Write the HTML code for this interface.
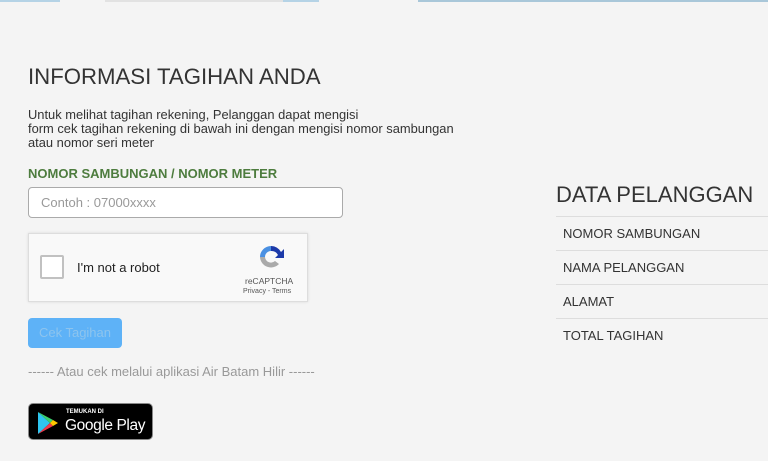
<!DOCTYPE html>
<html><head><meta charset="utf-8"><style>
body{margin:0;width:768px;height:461px;background:#f4f4f4;font-family:"Liberation Sans",sans-serif;position:relative;overflow:hidden;color:#333}
.a{position:absolute;white-space:nowrap}
.row{position:absolute;left:556px;width:212px;border-top:1px solid #ddd;height:33px;font-size:13px;color:#333;line-height:33px;padding-left:7px;box-sizing:border-box}
</style></head><body>
<div class="a" style="left:0;top:0;width:60px;height:2px;background:#b5d3e6"></div>
<div class="a" style="left:105px;top:0;width:180px;height:2px;background:#e2e2e2"></div>
<div class="a" style="left:283px;top:0;width:36px;height:2px;background:#b5d3e6"></div>
<div class="a" style="left:418px;top:0;width:350px;height:2px;background:#a9c7d9"></div>

<div class="a" style="left:28px;top:64px;font-size:22.2px;color:#333">INFORMASI TAGIHAN ANDA</div>
<div class="a" style="left:28px;top:108px;font-size:12.9px;line-height:14px;color:#333">Untuk melihat tagihan rekening, Pelanggan dapat mengisi<br>form cek tagihan rekening di bawah ini dengan mengisi nomor sambungan<br>atau nomor seri meter</div>
<div class="a" style="left:28px;top:166px;font-size:13px;font-weight:bold;color:#4d7c3e">NOMOR SAMBUNGAN / NOMOR METER</div>
<div class="a" style="left:28px;top:187px;width:315px;height:31px;border:1px solid #aaa;border-radius:4px;background:#fff;box-sizing:border-box;font-size:13px;color:#999;line-height:29px;padding-left:12px">Contoh : 07000xxxx</div>

<div class="a" style="left:28px;top:233px;width:280px;height:69px;background:#f9f9f9;border:1px solid #ddd;box-shadow:0 0 3px rgba(0,0,0,.1);box-sizing:border-box">
 <div class="a" style="left:11px;top:21px;width:24px;height:24px;border:2px solid #c1c1c1;border-radius:2px;background:#fff;box-sizing:border-box"></div>
 <div class="a" style="left:48px;top:26px;font-size:13px;color:#222">I'm not a robot</div>
 <svg class="a" style="left:227px;top:8px" width="30" height="30" viewBox="0 0 30 30"><path d="M15 4a11 11 0 0 1 10 6l3-3v9h-9l3-3a7 7 0 0 0-7-4z" fill="#1c3aa9"/><path d="M4 15a11 11 0 0 1 11-11v5a6 6 0 0 0-6 6z" fill="#4a90e2"/><path d="M4 15a11 11 0 0 0 19 7l-4-3a6 6 0 0 1-10-4z" fill="#aaa"/></svg>
 <div class="a" style="left:216px;top:42px;font-size:8.5px;color:#555">reCAPTCHA</div>
 <div class="a" style="left:214px;top:54px;font-size:7px;color:#555">Privacy - Terms</div>
</div>

<div class="a" style="left:28px;top:318px;width:94px;height:30px;background:#5eb2f7;border-radius:4px;font-size:13px;color:#8dc4ee;line-height:30px;text-align:center">Cek Tagihan</div>
<div class="a" style="left:28px;top:364px;font-size:13px;color:#999">------ Atau cek melalui aplikasi Air Batam Hilir ------</div>

<div class="a" style="left:28px;top:403px;width:125px;height:37px;background:#000;border:1px solid #888;border-radius:5px;box-sizing:border-box">
 <svg class="a" style="left:8px;top:7px" width="22" height="24" viewBox="0 0 22 24"><path d="M1 1l12 11L1 23z" fill="#2ec5f0"/><path d="M1 1l15 8-3 3z" fill="#3bd16f"/><path d="M1 23l15-8-3-3z" fill="#f0394a"/><path d="M16 9l5 3-5 3-3-3z" fill="#ffc900"/></svg>
 <div class="a" style="left:37px;top:5px;font-size:6px;color:#fff;font-weight:bold">TEMUKAN DI</div>
 <div class="a" style="left:36px;top:13px;font-size:15.5px;color:#fff;letter-spacing:-0.4px">Google Play</div>
</div>

<div class="a" style="left:556px;top:182px;font-size:22px;color:#333">DATA PELANGGAN</div>
<div class="row" style="top:216px">NOMOR SAMBUNGAN</div>
<div class="row" style="top:250px">NAMA PELANGGAN</div>
<div class="row" style="top:284px">ALAMAT</div>
<div class="row" style="top:318px">TOTAL TAGIHAN</div>
</body></html>
